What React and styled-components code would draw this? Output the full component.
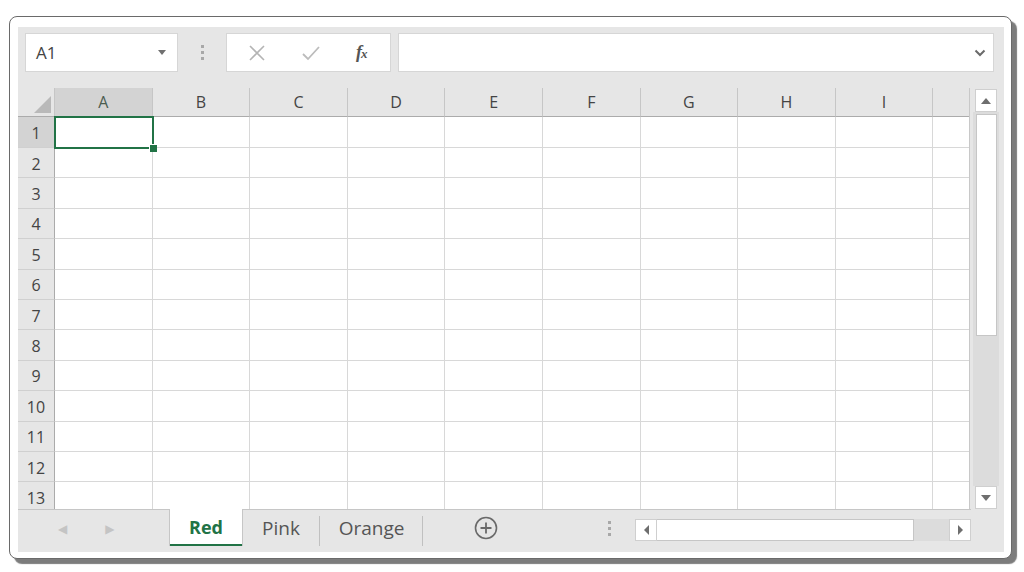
import React from "react";
import styled, { createGlobalStyle, css } from "styled-components";

const COLUMNS = ["A", "B", "C", "D", "E", "F", "G", "H", "I", "J"];
const ROWS = Array.from({ length: 13 }, (_, i) => i + 1);
const TABS = [
  { name: "Red", width: 72 },
  { name: "Pink", width: 78 },
  { name: "Orange", width: 103 },
];

const GlobalStyle = createGlobalStyle`
  html, body {
    margin: 0;
    padding: 0;
    background: #ffffff;
  }
  body {
    font-family: "Open Sans", "Noto Sans", "DejaVu Sans", sans-serif;
    color: #444444;
  }
`;

const Page = styled.div`
  width: 1024px;
  height: 572px;
  padding: 16px 0 0 9px;
  box-sizing: border-box;
`;

const Window = styled.div`
  width: 1003px;
  height: 543px;
  box-sizing: border-box;
  border: 1px solid #6a6a6a;
  border-radius: 8px;
  background: #ffffff;
  padding: 10px 7px 6px 8px;
  box-shadow: 5px 5px 1px #7c7c7c;
`;

const Panel = styled.div`
  height: 100%;
  background: #e6e6e6;
  display: flex;
  flex-direction: column;
`;

const FormulaRow = styled.div`
  display: flex;
  align-items: center;
  height: 39px;
  margin: 6px 10px 16px 7px;
`;

const Field = styled.div`
  height: 39px;
  box-sizing: border-box;
  background: #ffffff;
  border: 1px solid #d6d6d6;
  display: flex;
  align-items: center;
`;

const NameBox = styled(Field)`
  width: 153px;
  padding: 0 10px;
  justify-content: space-between;
  font-size: 17px;
  color: #444;
`;

const SmallTriangle = styled.span`
  width: 0;
  height: 0;
  border-left: 4px solid transparent;
  border-right: 4px solid transparent;
  border-top: 5px solid #707070;
  margin-right: 1px;
`;

const Grip = styled.div`
  width: 48px;
  display: flex;
  flex-direction: column;
  align-items: center;
  gap: 3px;
`;

const GripDot = styled.span`
  width: 3px;
  height: 3px;
  background: #a8a8a8;
`;

const ButtonGroup = styled(Field)`
  width: 165px;
  justify-content: space-around;
  padding: 0 6px 0 4px;
`;

const FxLabel = styled.span`
  font-family: "Liberation Serif", "DejaVu Serif", serif;
  font-style: italic;
  font-weight: bold;
  font-size: 18px;
  color: #555;
  letter-spacing: -1px;
`;

const FxSub = styled.span`
  font-size: 13px;
`;

const FormulaInput = styled(Field)`
  flex: 1;
  margin-left: 7px;
  justify-content: flex-end;
  padding-right: 7px;
`;

const SheetArea = styled.div`
  display: flex;
  height: 421px;
`;

const Sheet = styled.div`
  width: 953px;
  overflow: hidden;
  display: grid;
  grid-template-columns: 37px repeat(10, 97.6px);
  grid-template-rows: 29px 31px repeat(12, 30.4px);
  background: #ffffff;
  border-right: 1px solid #c8c8c8;
  box-sizing: border-box;
  position: relative;
`;

const Corner = styled.div`
  background: #e6e6e6;
  border-bottom: 1px solid #ababab;
  border-right: 1px solid #c6c6c6;
  display: flex;
  align-items: flex-end;
  justify-content: flex-end;
  padding: 0 3px 3px 0;
`;

const CornerTriangle = styled.span`
  width: 0;
  height: 0;
  border-left: 17px solid transparent;
  border-bottom: 17px solid #b9b9b9;
`;

const ColHeader = styled.div`
  background: ${({ $active }) => ($active ? "#d3d3d3" : "#e6e6e6")};
  border-bottom: 1px solid #ababab;
  border-right: 1px solid #c6c6c6;
  display: flex;
  align-items: center;
  justify-content: center;
  font-size: 16px;
  color: ${({ $active }) => ($active ? "#4b5d50" : "#444")};
  box-sizing: border-box;
`;

const RowHeader = styled.div`
  background: ${({ $active }) => ($active ? "#d3d3d3" : "#e6e6e6")};
  border-bottom: 1px solid #d0d0d0;
  border-right: 1px solid #ababab;
  display: flex;
  align-items: center;
  justify-content: center;
  padding-top: 2px;
  font-size: 16px;
  color: #444;
  box-sizing: border-box;
`;

const Cell = styled.div`
  border-right: 1px solid #d8d8d8;
  border-bottom: 1px solid #d8d8d8;
  box-sizing: border-box;
`;

const Selection = styled.div`
  position: absolute;
  left: 36px;
  top: 28px;
  width: 100px;
  height: 33px;
  border: 2px solid #217346;
  box-sizing: border-box;
  pointer-events: none;
`;

const FillHandle = styled.span`
  position: absolute;
  right: -5px;
  bottom: -5px;
  width: 7px;
  height: 7px;
  background: #217346;
  border: 1px solid #ffffff;
  border-right: none;
  border-bottom: none;
`;

const VScroll = styled.div`
  width: 34px;
  display: flex;
  flex-direction: column;
  align-items: center;
  padding: 1px 0 0;
  box-sizing: border-box;
`;

const Track = styled.div`
  flex: 1;
  width: 26px;
  background: #dcdcdc;
  display: flex;
  flex-direction: column;
  align-items: center;
  margin-left: -2px;
`;

const VThumb = styled.div`
  width: 21px;
  height: 222px;
  margin-top: 2px;
  background: #ffffff;
  border: 1px solid #c6c6c6;
  box-sizing: border-box;
`;

const Spacer = styled.div`
  flex: 1;
`;

const ArrowButton = styled.div`
  width: 22px;
  height: 23px;
  box-sizing: border-box;
  background: #ffffff;
  border: 1px solid #cfcfcf;
  display: flex;
  align-items: center;
  justify-content: center;
  margin-left: -2px;
`;

const Arrow = styled.span`
  width: 0;
  height: 0;
  ${({ $dir }) =>
    $dir === "up" &&
    css`
      border-left: 5px solid transparent;
      border-right: 5px solid transparent;
      border-bottom: 6px solid #6e6e6e;
    `}
  ${({ $dir }) =>
    $dir === "down" &&
    css`
      border-left: 5px solid transparent;
      border-right: 5px solid transparent;
      border-top: 6px solid #6e6e6e;
    `}
  ${({ $dir }) =>
    $dir === "left" &&
    css`
      border-top: 5px solid transparent;
      border-bottom: 5px solid transparent;
      border-right: 5px solid #6e6e6e;
    `}
  ${({ $dir }) =>
    $dir === "right" &&
    css`
      border-top: 5px solid transparent;
      border-bottom: 5px solid transparent;
      border-left: 5px solid #6e6e6e;
    `}
`;

const TabBar = styled.div`
  flex: 1;
  display: flex;
  align-items: flex-start;
  border-top: 1px solid #c6c6c6;
  margin-right: 33px;
`;

const NavArrows = styled.div`
  width: 152px;
  height: 36px;
  display: flex;
  align-items: center;
  padding-left: 40px;
  gap: 38px;
  box-sizing: border-box;
  color: #c4c4c4;
  font-size: 12px;
`;

const Tab = styled.div`
  width: ${({ $width }) => $width}px;
  height: 36px;
  display: flex;
  align-items: center;
  justify-content: center;
  font-size: 19px;
  color: #555;
  box-sizing: border-box;
  position: relative;
  ${({ $active }) =>
    $active &&
    css`
      background: #ffffff;
      color: #217346;
      font-weight: bold;
      font-size: 18px;
      margin-top: -1px;
      height: 37px;
      border-bottom: 2px solid #217346;
      box-shadow: 1px 0 0 #c6c6c6, -1px 0 0 #c6c6c6;
    `}
  ${({ $divider }) =>
    $divider &&
    css`
      &::after {
        content: "";
        position: absolute;
        right: 0;
        top: 6px;
        bottom: 0;
        width: 1px;
        background: #c0c0c0;
      }
    `}
`;

const AddSheet = styled.div`
  width: 126px;
  height: 36px;
  display: flex;
  align-items: center;
  justify-content: center;
`;

const TabsGrip = styled.div`
  height: 36px;
  width: 52px;
  margin-left: auto;
  display: flex;
  align-items: center;
  justify-content: center;
`;

const HScroll = styled.div`
  display: flex;
  align-items: center;
  height: 22px;
  margin-top: 9px;
  width: 336px;
  background: #dcdcdc;
`;

const HThumb = styled.div`
  width: 257px;
  height: 22px;
  box-sizing: border-box;
  background: #ffffff;
  border: 1px solid #c6c6c6;
  border-left: none;
`;

const HArrow = styled(ArrowButton)`
  height: 22px;
  margin-left: 0;
  ${({ $right }) =>
    $right &&
    css`
      margin-left: auto;
    `}
`;

function CrossIcon() {
  return (
    <svg width="18" height="18" viewBox="0 0 18 18">
      <path d="M2 2 L16 16 M16 2 L2 16" stroke="#b4b4b4" strokeWidth="1.6" fill="none" />
    </svg>
  );
}

function CheckIcon() {
  return (
    <svg width="20" height="18" viewBox="0 0 20 18">
      <path d="M2 10 L7 15 L18 3" stroke="#bcbcbc" strokeWidth="1.8" fill="none" />
    </svg>
  );
}

function ChevronDown() {
  return (
    <svg width="12" height="8" viewBox="0 0 12 8">
      <path d="M1.5 1.5 L6 6 L10.5 1.5" stroke="#6a6a6a" strokeWidth="2" fill="none" />
    </svg>
  );
}

function PlusCircle() {
  return (
    <svg width="24" height="24" viewBox="0 0 24 24">
      <circle cx="12" cy="12" r="10.5" stroke="#6a6a6a" strokeWidth="1.6" fill="none" />
      <path d="M12 6.5 V17.5 M6.5 12 H17.5" stroke="#6a6a6a" strokeWidth="1.8" />
    </svg>
  );
}

function Dots() {
  return (
    <Grip>
      <GripDot />
      <GripDot />
      <GripDot />
    </Grip>
  );
}

export default function App() {
  return (
    <>
      <GlobalStyle />
      <Page>
        <Window>
          <Panel>
            <FormulaRow>
              <NameBox>
                A1
                <SmallTriangle />
              </NameBox>
              <Dots />
              <ButtonGroup>
                <CrossIcon />
                <CheckIcon />
                <FxLabel>
                  f<FxSub>x</FxSub>
                </FxLabel>
              </ButtonGroup>
              <FormulaInput>
                <ChevronDown />
              </FormulaInput>
            </FormulaRow>

            <SheetArea>
              <Sheet>
                <Corner>
                  <CornerTriangle />
                </Corner>
                {COLUMNS.map((c) => (
                  <ColHeader key={c} $active={c === "A"}>
                    {c === "J" ? "" : c}
                  </ColHeader>
                ))}
                {ROWS.map((r) => (
                  <React.Fragment key={r}>
                    <RowHeader $active={r === 1}>{r}</RowHeader>
                    {COLUMNS.map((c) => (
                      <Cell key={c + r} />
                    ))}
                  </React.Fragment>
                ))}
                <Selection>
                  <FillHandle />
                </Selection>
              </Sheet>
              <VScroll>
                <ArrowButton>
                  <Arrow $dir="up" />
                </ArrowButton>
                <Track>
                  <VThumb />
                  <Spacer />
                </Track>
                <ArrowButton>
                  <Arrow $dir="down" />
                </ArrowButton>
              </VScroll>
            </SheetArea>

            <TabBar>
              <NavArrows>
                <span>◀</span>
                <span>▶</span>
              </NavArrows>
              {TABS.map((t, i) => (
                <Tab key={t.name} $active={i === 0} $divider={i > 0} $width={t.width}>
                  {t.name}
                </Tab>
              ))}
              <AddSheet>
                <PlusCircle />
              </AddSheet>
              <TabsGrip>
                <Dots />
              </TabsGrip>
              <HScroll>
                <HArrow>
                  <Arrow $dir="left" />
                </HArrow>
                <HThumb />
                <HArrow $right>
                  <Arrow $dir="right" />
                </HArrow>
              </HScroll>
            </TabBar>
          </Panel>
        </Window>
      </Page>
    </>
  );
}
